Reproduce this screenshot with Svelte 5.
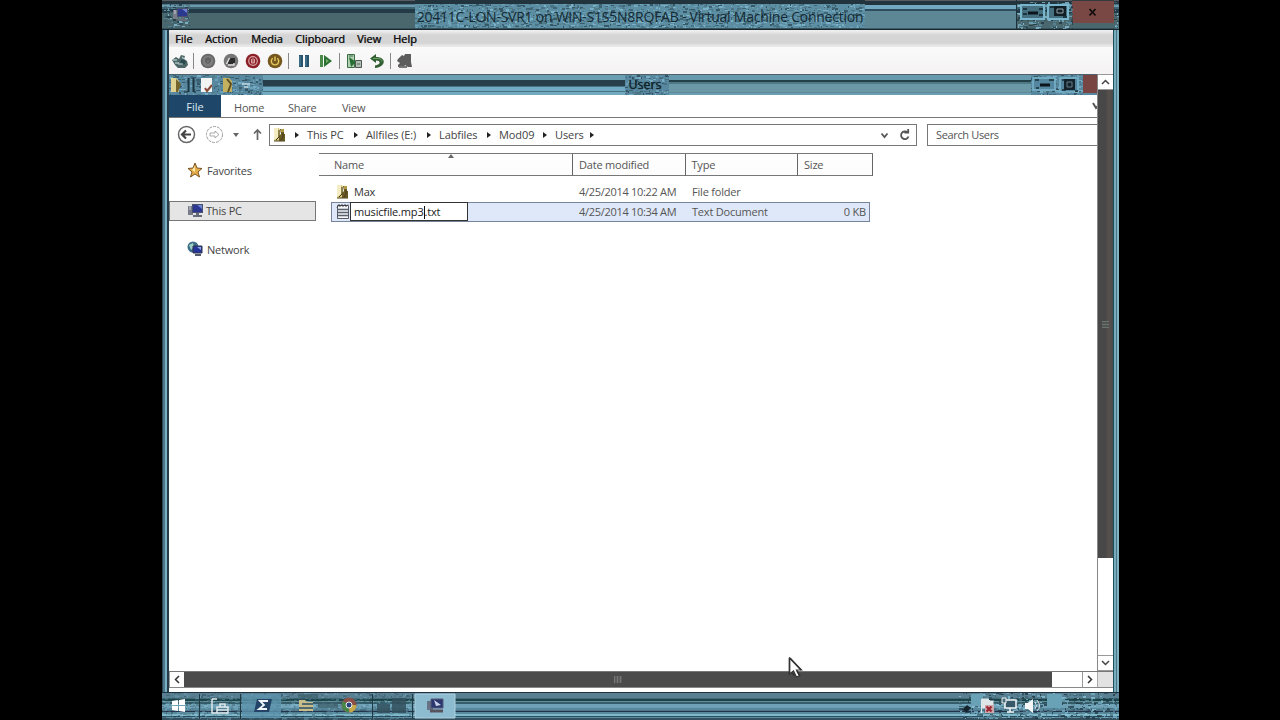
<script>
  const glass = ["#1d3540", "#2b4b58", "#3f6573", "#5b8b9d", "#79b2ca", "#8cc6dc", "#4a6f7b"];

  const menus = ["File", "Action", "Media", "Clipboard", "View", "Help"];
  const ribbon = ["Home", "Share", "View"];
  const crumbs = ["This PC", "Allfiles (E:)", "Labfiles", "Mod09", "Users"];

  // small blocks of frame colour, the same on every load
  function speckle(w, h, seed) {
    const blocks = [];
    let s = seed;
    const next = () => {
      s = (s * 16807) % 2147483647;
      return s / 2147483647;
    };
    for (let y = 0; y < h; y += 2) {
      for (let x = 0; x < w; x += 3) {
        if (next() < 0.25) continue;
        blocks.push({
          x: x + Math.floor(next() * 2),
          y: y + Math.floor(next() * 2),
          w: 1 + Math.floor(next() * 4),
          h: 1 + Math.floor(next() * 2),
          fill: glass[Math.floor(next() * glass.length)],
        });
      }
    }
    return blocks;
  }
</script>

{#snippet grain(w, h, seed)}
  <svg class="grain" width={w} height={h} viewBox="0 0 {w} {h}" shape-rendering="crispEdges">
    {#each speckle(w, h, seed) as b}
      <rect x={b.x} y={b.y} width={b.w} height={b.h} fill={b.fill} />
    {/each}
  </svg>
{/snippet}

{#snippet monitor()}
  <svg width="17" height="15" viewBox="0 0 17 15">
    <path d="M1 3h5v9H1z" fill="#777c88" />
    <path d="M2 4h2M2 6h2" stroke="#c5c9d4" />
    <path d="M5 1h11v9H5z" fill="#4a5270" />
    <path d="M6 2h9v7H6z" fill="#2b3990" />
    <path d="M10 2h5v4z" fill="#6d85d2" />
    <path d="M9 10h3v2h3v2H6v-2h3z" fill="#666c78" />
  </svg>
{/snippet}

{#snippet folder()}
  <svg width="13" height="15" viewBox="0 0 13 15">
    <path d="M1 1h5l1 2v11H1z" fill="#d9c980" />
    <path d="M1 1h4v9l-4 3z" fill="#f4edc4" />
    <path d="M7 2h4v5h1v7H6V9l2-2z" fill="#6b5b22" />
    <path d="M8 2h3v3H8z" fill="#b39b48" />
    <path d="M6 3v7l-3 3M10 6v4l-2 3" fill="none" stroke="#40391c" />
    <path d="M1 14h11" stroke="#4d451f" />
  </svg>
{/snippet}

<div class="screen">
  <div class="vm">
    <div class="titlebar">
      <div class="title-left">
        {@render grain(26, 24, 11)}
        <span class="over">{@render monitor()}</span>
      </div>
      <div class="title-text">
        {@render grain(450, 24, 77)}
        <span class="over">20411C-LON-SVR1 on WIN-S1S5N8RQFAB - Virtual Machine Connection</span>
      </div>
      <div class="title-right"></div>
      <div class="winbtns">
        {@render grain(56, 27, 31)}
        <svg class="over" width="56" height="24" viewBox="0 0 56 24">
          <path d="M4 5h23v14H4zM31 5h20v14H31z" fill="#467080" stroke="#79b5cc" stroke-width="2" />
          <path d="M6 9h4M22 9h4M6 14h4M22 15h4M33 7h4M46 17h4" stroke="#1d3540" stroke-width="2" />
          <path d="M11 13h10" stroke="#0b151b" stroke-width="3" />
          <path d="M37 6h12v10H37z" fill="#111d24" />
          <path d="M40 9h6v4h-6z" fill="none" stroke="#93a4ab" />
        </svg>
      </div>
      <div class="close">
        <svg width="10" height="9" viewBox="0 0 10 9"><path d="M1.500 1l6 6.500M7.500 1l-6 6.500" stroke="#120d0d" stroke-width="1.800" /></svg>
      </div>
      <div class="corner">{@render grain(12, 29, 8)}</div>
    </div>

    <div class="frame">
      <div class="menubar">
        {#each menus as menu}<span>{menu}</span>{/each}
      </div>

      <div class="toolbar">
        <span class="tool">
          <svg width="18" height="16" viewBox="0 0 18 16">
            <path d="M1 7l4-3 3 2 2-4 4 1-1 3 3 2 1 4-3 3H7l-3-3z" fill="#4c6566" />
            <path d="M2 7h4M4 10h4M11 4l2 2" stroke="#a8c1c0" stroke-width="1.500" />
            <circle cx="12" cy="9" r="2.500" fill="#29494d" />
            <path d="M7 11h5" stroke="#c0d3d1" />
          </svg>
        </span>
        <i class="sep"></i>
        <span class="tool">
          <svg width="16" height="16" viewBox="0 0 16 16">
            <circle cx="8" cy="8" r="7.300" fill="#666" />
            <circle cx="8" cy="8" r="5.500" fill="#7d7d7d" />
            <path d="M6 5v4c1 2 4 1 4-1V5M8 4v4" fill="none" stroke="#4b4b4b" />
          </svg>
        </span>
        <span class="tool">
          <svg width="16" height="16" viewBox="0 0 16 16">
            <circle cx="8" cy="8" r="7.300" fill="#777" />
            <path d="M5 11V7l3-2h4v6z" fill="#2c2c2c" />
            <path d="M3.500 11l3-6M5 12h6v-2" fill="none" stroke="#ddd" stroke-width="1.500" />
          </svg>
        </span>
        <span class="tool">
          <svg width="16" height="16" viewBox="0 0 16 16">
            <circle cx="8" cy="8" r="7.300" fill="#8c2027" />
            <circle cx="8" cy="8" r="4.300" fill="none" stroke="#d9a3a3" stroke-width="1.200" />
            <path d="M8 5v5M6.500 6v4h3V6" fill="none" stroke="#d9a3a3" />
          </svg>
        </span>
        <span class="tool">
          <svg width="16" height="16" viewBox="0 0 16 16">
            <circle cx="8" cy="8" r="7.300" fill="#76581f" />
            <path d="M5.700 5.300a3.700 3.700 0 1 0 4.600 0M8 3.500V8" fill="none" stroke="#e6c95c" stroke-width="1.400" />
          </svg>
        </span>
        <i class="sep"></i>
        <span class="tool">
          <svg width="12" height="14" viewBox="0 0 12 14">
            <path d="M1 1h4v12H1zM7 1h4v12H7z" fill="#29536d" />
            <path d="M2 2v10M8 2v10" stroke="#5286a1" />
          </svg>
        </span>
        <span class="tool">
          <svg width="14" height="14" viewBox="0 0 14 14">
            <path d="M1 1h3v12H1z" fill="#4a8b49" />
            <path d="M5 1l8 6-8 6z" fill="#2c7032" />
            <path d="M7 5l3 2-3 2z" fill="#72ac69" />
          </svg>
        </span>
        <i class="sep"></i>
        <span class="tool">
          <svg width="17" height="16" viewBox="0 0 17 16">
            <path d="M1.500 1.500h7v13h-7z" fill="#b4d0b7" stroke="#3c6e43" />
            <path d="M3 4l7 5-5 5z" fill="#267032" />
            <path d="M9.500 7.500h6v7h-6z" fill="#b3bcb5" stroke="#4a5850" />
            <path d="M3 3h4M11 11h3" stroke="#42704a" />
          </svg>
        </span>
        <span class="tool">
          <svg width="16" height="16" viewBox="0 0 16 16">
            <path d="M7 1L1 5.500 7 10V7.500c5 0 5 4-1 5v2.500c11-1 12-11 1-11z" fill="#315e32" />
            <path d="M4 5.500h5c3 0 4 2 4 3" fill="none" stroke="#6da366" />
          </svg>
        </span>
        <i class="sep"></i>
        <span class="tool">
          <svg width="17" height="16" viewBox="0 0 17 16">
            <path d="M2 6l4-4 2 1 1-2h6v8l1 5h-4l-3-2-1 2H2v-2l2-2-3-2z" fill="#5d5d5d" />
            <path d="M3 14h8" stroke="#777" stroke-width="2" />
          </svg>
        </span>
      </div>

      <div class="view">
        <div class="desktop">
          <div class="explorer-title">
            <div class="quick">
              {@render grain(94, 20, 5)}
              <svg class="over" width="94" height="20" viewBox="0 0 94 20">
                <path d="M2 3h5l3 3v11H2z" fill="#e0d290" />
                <path d="M7 4l5 5-3 8H7z" fill="#75642c" />
                <path d="M19.500 3v14M24.500 3v14" stroke="#1d3540" stroke-width="2" />
                <path d="M32 3h11v14H32z" fill="#f2f4f3" />
                <path d="M36 13l2 3 5-6" fill="none" stroke="#884b39" stroke-width="2" />
                <path d="M54 3h6l3 3v11h-9z" fill="#c4b160" />
                <path d="M58 4l4 5-3 8" fill="none" stroke="#5e5022" stroke-width="2" />
                <path d="M73 9h8M75 12h4" stroke="#c5dce4" stroke-width="1.500" />
              </svg>
            </div>
            <div class="bar-left"></div>
            <div class="users-title">
              {@render grain(44, 20, 91)}
              <span class="over">Users</span>
            </div>
            <div class="bar-right"></div>
            <div class="inner-btns">
              {@render grain(52, 20, 45)}
              <svg class="over" width="52" height="20" viewBox="0 0 52 20">
                <path d="M2 3h22v12H2zM29 3h18v14H29z" fill="#5586a0" stroke="#79b5cc" stroke-width="1.500" />
                <path d="M4 5h4M18 5h5M5 13h3M31 15h4M31 5h3M44 16h3" stroke="#28444f" stroke-width="2" />
                <path d="M9 10h10" stroke="#0b151b" stroke-width="3" />
                <path d="M33 4h11v11H33z" fill="#14232b" />
                <path d="M36 7h5v5h-5z" fill="none" stroke="#647e88" />
              </svg>
            </div>
            <div class="inner-close"></div>
          </div>

          <div class="ribbon">
            <span class="file">File</span>
            {#each ribbon as tab}<span class="tab">{tab}</span>{/each}
            <svg class="expand" width="5" height="8" viewBox="0 0 5 8"><path d="M1 1l3 5 3-3" fill="none" stroke="#555" stroke-width="2" /></svg>
          </div>

          <div class="nav">
            <div class="arrows">
              <svg width="100" height="22" viewBox="0 0 100 22">
                <circle cx="17.500" cy="10.500" r="8" fill="#fff" stroke="#666" stroke-width="1.500" />
                <path d="M22 10.500h-8M17 6.500l-4 4 4 4" fill="none" stroke="#444" stroke-width="2.200" />
                <circle cx="45.500" cy="10.500" r="8" fill="none" stroke="#999" stroke-dasharray="3 1" />
                <path d="M41 9h5V7l4 3.500-4 3.500v-2h-5z" fill="none" stroke="#aaa" />
                <path d="M64 9h6l-3 4z" fill="#666" />
                <path d="M88.500 16V6M85 9.500L88.500 6 92 9.500" fill="none" stroke="#666" stroke-width="1.700" />
              </svg>
            </div>
            <div class="address">
              <span class="loc">{@render folder()}</span>
              <i class="chev"></i>
              <div class="crumbs">
                {#each crumbs as crumb}
                  <span>{crumb}<i class="chev"></i></span>
                {/each}
              </div>
              <svg class="refresh" width="32" height="14" viewBox="0 0 32 14">
                <path d="M1.500 5.500l3 3.500 3-3.500" fill="none" stroke="#555" stroke-width="1.800" />
                <path d="M27.500 4.500a3.800 3.800 0 1 0 1 4M24.500 4.500h3.700V1" fill="none" stroke="#555" stroke-width="1.800" />
              </svg>
            </div>
            <div class="search">Search Users</div>
          </div>

          <div class="content">
            <div class="tree">
              <div class="node">
                <svg width="16" height="16" viewBox="0 0 16 16">
                  <path d="M8 1l2 5 5 .5-4 3.500 1.500 5L8 12l-4.500 3L5 10 1 6.500 6 6z" fill="#e5ad49" stroke="#7b5423" />
                  <path d="M8 4v6l-3-2z" fill="#fbe7a8" />
                </svg>
                Favorites
              </div>
              <div class="node selected">{@render monitor()}This PC</div>
              <div class="node">
                <svg width="16" height="16" viewBox="0 0 16 16">
                  <circle cx="6" cy="6" r="5.500" fill="#3c6d85" />
                  <path d="M2 4l4-2 1 4-3 3z" fill="#9ed0c8" />
                  <path d="M6 5h9v7H6z" fill="#25349b" stroke="#30374e" />
                  <path d="M10 6h4v3z" fill="#8ba5e3" />
                  <path d="M8 14h6" stroke="#555b69" stroke-width="2" />
                </svg>
                Network
              </div>
            </div>
            <div class="files">
              <div class="head">
                <span>Name</span><span>Date modified</span><span>Type</span><span>Size</span>
                <i class="sort"></i>
              </div>
              <div class="row">
                <span class="icon">{@render folder()}</span>
                <span class="name">Max</span>
                <span class="date">4/25/2014 10:22 AM</span>
                <span>File folder</span>
                <span></span>
              </div>
              <div class="row active">
                <span class="icon">
                  <svg width="14" height="17" viewBox="0 0 14 17">
                    <path d="M1.500 2.500h11v13h-11z" fill="#f2f4f7" stroke="#555c66" />
                    <path d="M1 4.500l2-3 1 2 2-2 1 2 2-2 1 2 2-2" fill="none" stroke="#333" />
                    <path d="M2 6.500h10M2 9.500h10M2 12.500h10" stroke="#59616e" stroke-width="1.500" />
                  </svg>
                </span>
                <span class="rename">musicfile.mp3<i class="caret"></i>.txt</span>
                <span class="date">4/25/2014 10:34 AM</span>
                <span>Text Document</span>
                <span class="size">0 KB</span>
              </div>
            </div>
          </div>
        </div>

        <div class="vscroll">
          <div class="sbtn"><svg width="9" height="6" viewBox="0 0 9 6"><path d="M1 5l3.500-3.500L8 5" fill="none" stroke="#444" stroke-width="1.500" /></svg></div>
          <div class="vthumb"><i></i></div>
          <div class="vtrack"></div>
          <div class="sbtn"><svg width="9" height="6" viewBox="0 0 9 6"><path d="M1 1l3.500 3.500L8 1" fill="none" stroke="#444" stroke-width="1.500" /></svg></div>
        </div>
      </div>

      <div class="hscroll">
        <div class="hbtn"><svg width="6" height="9" viewBox="0 0 6 9"><path d="M5 1L1.500 4.500 5 8" fill="none" stroke="#333" stroke-width="1.500" /></svg></div>
        <div class="hthumb"><i></i></div>
        <div class="htrack"></div>
        <div class="hbtn"><svg width="6" height="9" viewBox="0 0 6 9"><path d="M1 1l3.500 3.500L1 8" fill="none" stroke="#333" stroke-width="1.500" /></svg></div>
        <div class="grip"></div>
      </div>
    </div>

    <div class="taskbar">
      <div class="apps">
        {@render grain(253, 27, 63)}
        <svg class="over" width="300" height="28" viewBox="0 0 300 28">
          <path d="M37.500 2v25M78.500 2v25M210.500 2v25M250.500 2v25" stroke="#1f3944" />
          <path d="M80 2h39v24H80z" fill="#5c94ad" opacity=".8" />
          <path d="M136 2h20v4h-20zM156 10h20v6h-20z" fill="#3c5c68" opacity=".7" />
          <path d="M10 9l6-1v5h-6zM17 8l6-1v6h-6zM10 14h6v5l-6-1zM17 14h6v6l-6-1z" fill="#fff" />
          <path d="M50 7h5M50 7v14h5M55 15h11v6H55zM58 15v-3h5v3M55 18h11" fill="none" stroke="#dfe9ec" stroke-width="1.500" />
          <path d="M95 7h15l-3 13H92z" fill="#234467" />
          <path d="M106 9h-8l4 4-5 4h8" fill="none" stroke="#f1f6fb" stroke-width="1.800" />
          <path d="M137 8h6l2 2h6v9h-14z" fill="#c8bc8a" />
          <path d="M140 12h11M137 16h14" stroke="#536a6d" stroke-width="2" />
          <circle cx="187" cy="13" r="7.500" fill="#8b5149" />
          <path d="M187 13h7.500a7.500 7.500 0 0 1-7 7.500z" fill="#c6a94a" />
          <path d="M187 13v7.500A7.500 7.500 0 0 1 181 9z" fill="#47884a" />
          <circle cx="187" cy="13" r="3" fill="#27447c" stroke="#eee" />
          <path d="M215 12h13v9h-13zM230 6h14v15h-14z" fill="#33505d" opacity=".85" />
          <path d="M253 2h40v24h-40z" fill="#8dbcd0" stroke="#acd0df" />
          <path d="M265 9h6v9h-6z" fill="#687386" />
          <path d="M269 7h12v9h-12z" fill="#2b3870" stroke="#525875" />
          <path d="M272 8l2 6 5-1z" fill="#c9d2e8" />
          <path d="M268 19h13" stroke="#56535f" stroke-width="3" />
        </svg>
      </div>
      <div class="tray">
        {@render grain(158, 26, 29)}
        <svg class="over" width="158" height="28" viewBox="0 0 158 28">
          <path d="M12 2h12v12H12zM88 2h15v14H88z" fill="#69a1b6" />
          <path d="M3 18l5-5 4 3-4 4z" fill="#15252e" />
          <path d="M22.500 7v14M23 7h6l2 2h3v7H23" fill="#dfe6e8" stroke="#dfe6e8" />
          <path d="M26 13h9v8h-9z" fill="#cda9ac" />
          <path d="M27.500 14.500l5 5M32.500 14.500l-5 5" stroke="#9c2630" stroke-width="2.200" />
          <path d="M46 8h11v8H46zM51 16v4M48 20h7" fill="#37596a" stroke="#f2f6f7" stroke-width="1.500" />
          <path d="M43 6h4v5h-4z" fill="#486c78" stroke="#f2f6f7" />
          <path d="M66 11h3l5-4v14l-5-4h-3z" fill="#f5f7f7" />
          <path d="M76 10q3 4 0 7M78 8q5 6 0 11" fill="none" stroke="#dce7eb" />
        </svg>
      </div>
    </div>

    <svg class="cursor" width="15" height="22" viewBox="0 0 15 22">
      <path d="M1.500 1v16l4-3 3 6 3-1.500-3-5.500h5z" fill="#fff" stroke="#333" stroke-width="1.200" />
      <path d="M1.500 1v16M2 1l11 12M9 14l3 5M4 16l3 3" fill="none" stroke="#333" stroke-width="1.600" />
    </svg>
  </div>
</div>

<style>
  :global(body) {
    background: #000;
  }

  .screen {
    width: 1280px;
    height: 720px;
    overflow: hidden;
    background: #000;
    display: flex;
    justify-content: center;
    font-family: "Open Sans", "Noto Sans", sans-serif;
    font-size: 11px;
    color: #555;
    white-space: nowrap;
  }

  .screen * {
    box-sizing: border-box;
  }

  svg {
    display: block;
    flex: none;
  }

  .vm {
    position: relative;
    width: 957px;
    height: 720px;
    margin-left: 1px;
    display: flex;
    flex-direction: column;
  }

  .over {
    position: absolute;
    left: 0;
    top: 0;
  }

  .titlebar {
    height: 30px;
    display: flex;
    border-bottom: 1px solid #17262d;
    background: linear-gradient(#595d62 0 1px, #22343d 1px 4px, #4e7584 4px 5px, #6b9aae 5px 7px, #3d6271 7px 9px, #223b47 9px 13px, #4a676e 13px 28px, #35525c 28px);
  }

  .title-left,
  .title-text,
  .winbtns {
    position: relative;
    flex: none;
    padding-top: 4px;
  }

  .title-left {
    width: 253px;
    padding-left: 2px;
  }

  .title-left .over {
    left: 10px;
    top: 7px;
  }

  .title-text {
    width: 450px;
    background: linear-gradient(#22343d 0 4px, #5d8fa4 4px 28px, #35525c 28px);
  }

  .title-text .over {
    top: 6px;
    width: 450px;
    text-align: center;
    font-size: 14px;
    line-height: 21px;
    color: #152a34;
    letter-spacing: -0.24px;
  }

  .title-right {
    flex: 1;
    background: linear-gradient(#595d62 0 1px, #22343d 1px 5px, #72a8c0 5px 9px, #2c4d5d 9px 11px, #5d8795 11px 28px, #40616c 28px);
  }

  .winbtns {
    width: 56px;
    padding-top: 2px;
    border-left: 1px solid #1d333c;
  }

  .close {
    width: 42px;
    height: 23px;
    background: #794844;
    border-top: 1px solid #343a3e;
    display: flex;
    align-items: center;
    justify-content: center;
  }

  .corner {
    width: 5px;
    overflow: hidden;
  }

  .frame {
    height: 662px;
    padding: 0 6px 0 7px;
    background:
      linear-gradient(90deg, #284754 0 1px, #4d7788 1px 3px, #77aec4 3px 5px, #253e49 5px 7px) left / 7px 100% no-repeat,
      linear-gradient(90deg, #1e4c5b 0 1px, #76aabd 1px 3px, #4c7584 3px 4px, #82b3c5 4px 6px) right / 6px 100% no-repeat,
      #fff;
  }

  .menubar {
    height: 17px;
    padding-left: 6px;
    display: grid;
    grid-template-columns: 30px 46px 44px 62px 36px 40px;
    color: #111;
    line-height: 18px;
    background: linear-gradient(#eee 0 1px, #d5d5d5 5px 13px, #e9e9e9 16px);
    text-shadow: 0.4px 0 #333;
  }

  .toolbar {
    height: 27px;
    padding-top: 1px;
    display: flex;
    align-items: center;
    background: linear-gradient(#fafafa, #f5f3f3);
  }

  .tool {
    width: 22.3px;
    display: flex;
    justify-content: center;
  }

  .sep {
    width: 6px;
    height: 16px;
    background: linear-gradient(90deg, transparent 2px, #888 2px 3px, transparent 3px);
  }

  .view {
    height: 597px;
    display: flex;
  }

  .desktop {
    width: 928px;
    display: flex;
    flex-direction: column;
  }

  .explorer-title {
    height: 21px;
    display: flex;
    border-top: 1px solid #4e6069;
    background: #5788a0;
  }

  .quick,
  .users-title,
  .inner-btns {
    position: relative;
    flex: none;
  }

  .quick {
    width: 94px;
  }

  .bar-left {
    width: 362px;
    background: linear-gradient(#6c9eb2 0 5px, #263f4b 5px 11px, #477283 11px 12px, #70abc3 12px 16px, #477586 16px 17px, #72aabe 17px);
  }

  .users-title {
    width: 44px;
  }

  .users-title .over {
    width: 40px;
    top: 0;
    text-align: center;
    font-size: 12.500px;
    line-height: 19px;
    color: #10222a;
    text-shadow: 0 0 1px #10222a;
  }

  .bar-right {
    flex: 1;
    background: linear-gradient(#689aae 0 5px, #233f48 5px 7px, #4e7987 7px 9px, #6b98a7 9px 17px, #5c8999 17px 18px, #6ba0b0 18px);
  }

  .inner-btns {
    width: 52px;
  }

  .inner-close {
    width: 14px;
    height: 18px;
    background: #794543;
  }

  .ribbon {
    height: 23px;
    flex: none;
    display: grid;
    grid-template-columns: 52px 54px 54px 54px 1fr;
    line-height: 24px;
    border-bottom: 1px solid #777;
    background: #fff;
  }

  .file {
    height: 22px;
    background: #1e4669;
    color: #dce8f2;
    text-align: center;
    line-height: 23px;
  }

  .tab {
    padding-left: 13px;
    line-height: 25px;
    letter-spacing: -0.2px;
  }

  .expand {
    justify-self: end;
    margin-top: 7px;
  }

  .nav {
    display: flex;
    padding-top: 6px;
    height: 35px;
    flex: none;
  }

  .arrows {
    width: 100px;
    flex: none;
  }

  .address {
    width: 648px;
    height: 22px;
    padding-bottom: 1px;
    border: 1px solid #777;
    display: flex;
    align-items: center;
    color: #444;
  }

  .loc {
    margin-left: 3px;
    width: 22px;
  }

  .chev {
    display: inline-block;
    border: 3px solid transparent;
    border-left: 4px solid #222;
    border-right: 0;
  }

  .crumbs {
    margin-left: 8px;
    display: grid;
    grid-template-columns: 59px 73px 60px 56px 46px;
    line-height: 19px;
    letter-spacing: -0.1px;
    flex: 1;
  }

  .crumbs span {
    display: flex;
    align-items: center;
    justify-content: space-between;
    padding-right: 8px;
  }

  .crumbs span:last-child {
    padding-right: 7px;
  }

  .refresh {
    margin-right: 4px;
    margin-top: 1px;
  }

  .search {
    flex: 1;
    height: 22px;
    margin-left: 10px;
    padding-left: 8px;
    border: 1px solid #777;
    border-right: 0;
    line-height: 20px;
    letter-spacing: -0.35px;
  }

  .content {
    display: flex;
    flex: 1;
    background: #fff;
  }

  .tree {
    width: 147px;
    padding-top: 8px;
  }

  .node {
    height: 20px;
    margin-bottom: 19.500px;
    padding: 0 0 2px 18px;
    display: flex;
    align-items: center;
    gap: 4px;
    color: #444;
    letter-spacing: -0.2px;
  }

  .node.selected {
    border: 1px solid #777;
    background: #e5e5e5;
    padding: 0 0 0 17px;
    gap: 2px;
  }

  .files {
    margin-left: 3px;
  }

  .head {
    position: relative;
    width: 554px;
    height: 23px;
    display: grid;
    grid-template-columns: 254px 112.500px 112.500px 75px;
    border-top: 1px solid #777;
    border-bottom: 1px solid #777;
    line-height: 22px;
    background: #fdfdfd;
    margin-bottom: 6px;
  }

  .head span {
    padding-left: 6px;
    border-right: 1px solid #666;
    letter-spacing: -0.2px;
  }

  .head span:first-child {
    padding-left: 15px;
  }

  .sort {
    position: absolute;
    left: 129px;
    top: 0;
    border: 3px solid transparent;
    border-top: 0;
    border-bottom: 4px solid #666;
  }

  .row {
    height: 20px;
    width: 539px;
    margin-left: 12px;
    padding-left: 4px;
    display: grid;
    grid-template-columns: 14px 229px 113px 112px 1fr;
    line-height: 18px;
    border: 1px solid transparent;
    letter-spacing: -0.2px;
  }

  .icon {
    padding-top: 1px;
  }

  .name {
    padding-left: 4px;
    color: #333;
  }

  .date {
    letter-spacing: -0.3px;
  }

  .row.active {
    background: #dfe8f8;
    border-color: #75849a;
  }

  .active .icon {
    padding-top: 0;
  }

  .rename {
    width: 118px;
    height: 19px;
    margin-top: -1px;
    padding-left: 3px;
    border: 1px solid #333;
    background: #fff;
    color: #222;
    line-height: 17px;
    letter-spacing: -0.17px;
  }

  .caret {
    display: inline-block;
    width: 1px;
    height: 13px;
    background: #111;
    vertical-align: -3px;
  }

  .size {
    text-align: right;
    padding-right: 3px;
  }

  .vscroll {
    width: 16px;
    border-left: 1px solid #888;
    background: #fff;
  }

  .sbtn {
    height: 16px;
    padding-right: 1px;
    display: flex;
    align-items: center;
    justify-content: center;
    border: 1px solid #999;
    border-width: 1px 0;
  }

  .vthumb {
    height: 468px;
    padding-right: 1px;
    background: linear-gradient(90deg, #484848 0 8px, #574f4c 10px 12px, #454c4e);
    display: flex;
    align-items: center;
    justify-content: center;
  }

  .vthumb i {
    width: 7px;
    height: 7px;
    background: repeating-linear-gradient(#6c7470 0 1px, #505552 1px 3px);
  }

  .vtrack {
    height: 97px;
  }

  .hscroll {
    height: 17px;
    display: flex;
    border-top: 1px solid #777;
    border-bottom: 1px solid #888;
    background: #fff;
  }

  .hbtn {
    width: 15px;
    display: flex;
    align-items: center;
    justify-content: center;
    border-left: 1px solid #999;
  }

  .hthumb {
    width: 868px;
    background: #4b4b4b;
    display: flex;
    align-items: center;
    justify-content: center;
  }

  .hthumb i {
    width: 8px;
    height: 7px;
    background: repeating-linear-gradient(90deg, #777 0 1px, #5a5a5a 1px 3px);
  }

  .htrack {
    width: 30px;
  }

  .grip {
    flex: 1;
    background: #e2e2e2;
    border-left: 1px solid #aaa;
  }

  .taskbar {
    height: 28px;
    display: flex;
    justify-content: space-between;
    background: linear-gradient(#1f313c 0 1px, #587f92 1px 6px, #3f6a76 6px 7px, #1c4448 7px 9px, #5f8f9c 9px 10px, #355c69 10px 12px, #6fa1b6 12px 16px, #57879c 16px 18px, #4f7486 18px 19px, #22334e 19px 20px, #5a8a9e 20px 22px, #7fb8c8 22px 24px, #284d60 24px 25px, #5d8da0 25px 26px, #34505f 26px);
  }

  .apps,
  .tray {
    position: relative;
    padding-top: 1px;
  }

  .tray {
    margin-right: 2px;
  }

  .grain {
    opacity: 0.75;
  }

  .title-text .grain {
    opacity: 0.6;
  }

  .quick .grain,
  .users-title .grain,
  .inner-btns .grain {
    opacity: 0.6;
  }

  .apps .grain {
    opacity: 0.35;
  }

  .cursor {
    position: absolute;
    left: 626px;
    top: 657px;
  }
</style>
